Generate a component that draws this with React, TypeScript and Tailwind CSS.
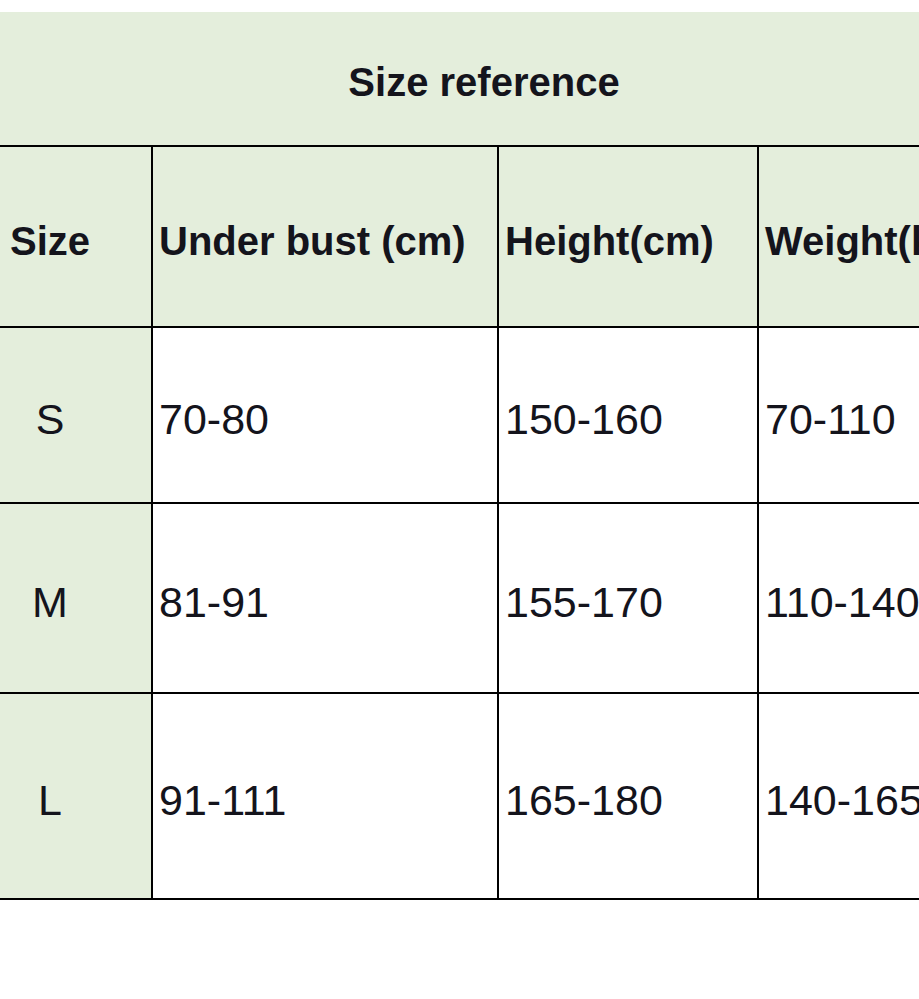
const rows = [
  { size: "S", bust: "70-80", height: "150-160", weight: "70-110", h: "h-[176px]" },
  { size: "M", bust: "81-91", height: "155-170", weight: "110-140", h: "h-[190px]" },
  { size: "L", bust: "91-111", height: "165-180", weight: "140-165", h: "h-[206px]" },
];

export default function App() {
  return (
    <div
      className="h-[999px] w-full overflow-hidden bg-white pt-[12px] text-[#14141c]"
      style={{ fontFamily: '"Liberation Sans", Arial, sans-serif' }}
    >
      <div className="ml-[-51px] w-[1070px]">
        <div className="flex h-[133px] items-center justify-center bg-[#e4eedc] pt-[6px] text-[40px] font-bold">
          Size reference
        </div>
        <div className="border-b-2 border-black">
          <div className="grid h-[181px] grid-cols-[202px_346px_260px_262px] border-t-2 border-black bg-[#e4eedc] text-[40px] font-bold">
            <div className="flex items-center justify-center pt-[8px]">Size</div>
            <div className="flex items-center border-l-2 border-black pl-[6px] pt-[8px]">Under bust (cm)</div>
            <div className="flex items-center border-l-2 border-black pl-[6px] pt-[8px]">Height(cm)</div>
            <div className="flex items-center whitespace-nowrap border-l-2 border-black pl-[6px] pt-[8px]">Weight(kg)</div>
          </div>
          {rows.map((r) => (
            <div
              key={r.size}
              className={`grid ${r.h} grid-cols-[202px_346px_260px_262px] border-t-2 border-black text-[43px]`}
            >
              <div className="flex items-center justify-center bg-[#e4eedc] pt-[8px]">{r.size}</div>
              <div className="flex items-center border-l-2 border-black pl-[6px] pt-[8px]">{r.bust}</div>
              <div className="flex items-center border-l-2 border-black pl-[6px] pt-[8px]">{r.height}</div>
              <div className="flex items-center whitespace-nowrap border-l-2 border-black pl-[6px] pt-[8px]">{r.weight}</div>
            </div>
          ))}
        </div>
      </div>
    </div>
  );
}
